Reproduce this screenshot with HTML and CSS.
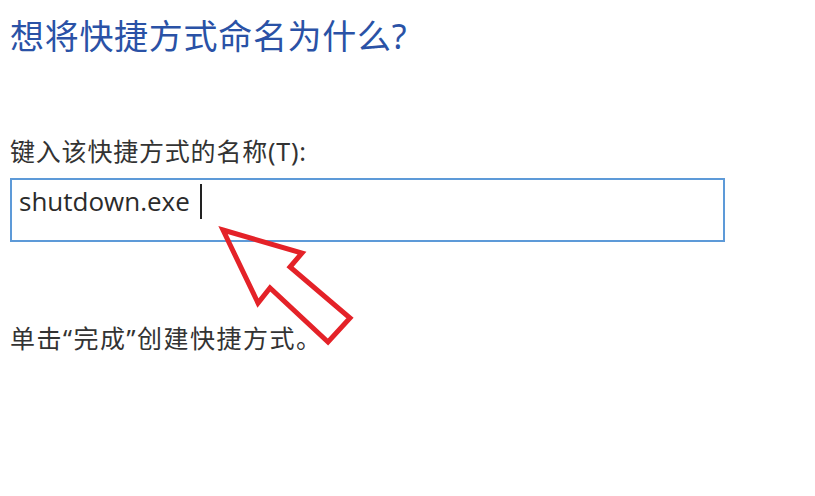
FILE: index.html
```html
<!DOCTYPE html>
<html lang="zh-CN">
<head>
<meta charset="utf-8">
<title>创建快捷方式</title>
<link rel="stylesheet" href="styles.css">
</head>
<body>
<div class="page">
  <h1 class="title">想将快捷方式命名为什么?</h1>
  <div class="label">键入该快捷方式的名称(T):</div>
  <div class="field"><span class="value">shutdown.exe</span><span class="caret"></span></div>
  <div class="hint">单击“完成”创建快捷方式。</div>
  <svg class="arrow" width="815" height="496" viewBox="0 0 815 496">
    <polygon points="223,230 302,253 290,267 350,318 328,342 270,288 258,303" fill="none" stroke="#e42228" stroke-width="5" stroke-linejoin="miter"/>
  </svg>
</div>
</body>
</html>
```
FILE: styles.css
```css
html, body {
  margin: 0;
  padding: 0;
  background: #ffffff;
}
.page {
  position: relative;
  width: 815px;
  height: 496px;
  overflow: hidden;
  padding: 15px 0 0 10px;
  box-sizing: border-box;
  font-family: "Noto Sans", "Noto Sans CJK SC", sans-serif;
}
.title {
  margin: 0;
  font-size: 34px;
  line-height: 42px;
  font-weight: 400;
  color: #2a52a6;
  letter-spacing: 0.7px;
}
.label {
  margin-top: 79px;
  font-size: 25px;
  line-height: 30px;
  color: #333333;
  letter-spacing: 0.8px;
}
.field {
  margin-top: 12px;
  width: 715px;
  height: 64px;
  box-sizing: border-box;
  border: 2px solid #5d9ad8;
  padding: 4px 0 0 7px;
  display: flex;
  align-items: flex-start;
}
.value {
  font-family: "Open Sans", "Noto Sans", sans-serif;
  font-size: 26px;
  line-height: 34px;
  color: #2b2b2b;
}
.caret {
  display: block;
  margin-left: 10px;
  width: 2px;
  height: 35px;
  background: #222222;
}
.hint {
  margin-top: 82px;
  font-size: 25px;
  line-height: 28px;
  color: #333333;
  letter-spacing: 1.5px;
}
.arrow {
  position: absolute;
  left: 0;
  top: 0;
  pointer-events: none;
}
```
